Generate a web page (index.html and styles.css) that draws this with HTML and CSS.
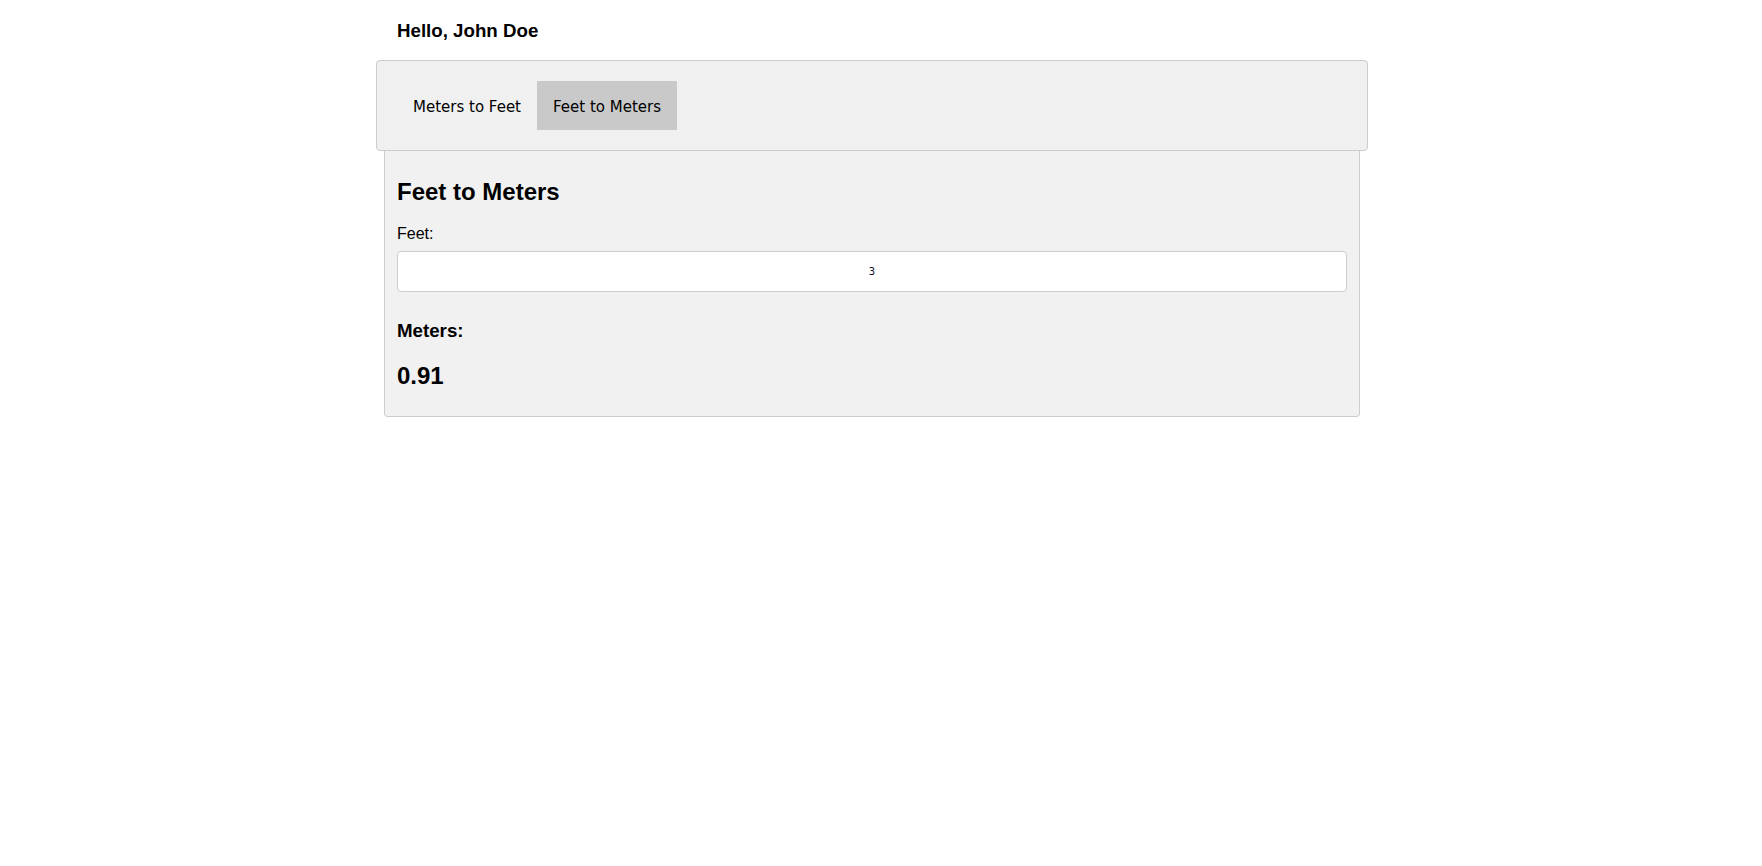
FILE: index.html
```html
<!DOCTYPE html>
<html lang="en">
<head>
<meta charset="utf-8">
<title>Unit Converter</title>
<link rel="stylesheet" href="styles.css">
</head>
<body>
<div class="app">
  <div class="greeting">Hello, John Doe</div>
  <div class="tabbar">
    <button class="tab">Meters to Feet</button>
    <button class="tab tab-active">Feet to Meters</button>
  </div>
  <div class="panel">
    <h2 class="panel-title">Feet to Meters</h2>
    <label class="field-label" for="feet">Feet:</label>
    <input class="field-input" id="feet" type="text" value="3">
    <h3 class="result-label">Meters:</h3>
    <div class="result-value">0.91</div>
  </div>
</div>
</body>
</html>
```

FILE: styles.css
```css
html, body {
  margin: 0;
  padding: 0;
  background: #ffffff;
  font-family: "Liberation Sans", Arial, sans-serif;
  color: #000;
}

.app {
  width: 992px;
  margin-left: 376px;
}

.greeting {
  padding: 20px 21px 0;
  font-size: 18.72px;
  font-weight: bold;
  line-height: 22px;
  margin-bottom: 18px;
}

.tabbar {
  display: flex;
  background: #f0f0f0;
  border: 1px solid #cccccc;
  border-radius: 4px;
  padding: 20px;
  height: 49px;
}

.tab {
  border: none;
  background: transparent;
  font-family: "DejaVu Sans", Tahoma, sans-serif;
  font-size: 15px;
  line-height: 21px;
  padding: 16px 16px 12px;
  margin: 0;
  color: #000;
  cursor: pointer;
}

.tab-active {
  background: #c9c9c9;
}

.panel {
  margin: 0 8px;
  background: #f1f1f1;
  border: 1px solid #cccccc;
  border-top: none;
  border-radius: 0 0 4px 4px;
  padding: 13px 12px 12px;
}

.panel-title {
  margin: 14px 0 0;
  font-size: 24px;
  line-height: 28px;
  font-weight: bold;
}

.field-label {
  display: block;
  margin-top: 19px;
  margin-bottom: 8px;
  font-size: 16px;
  line-height: 18px;
}

.field-input {
  display: block;
  box-sizing: border-box;
  width: 100%;
  height: 41px;
  margin: 0;
  border: 1px solid #cccccc;
  border-radius: 4px;
  background: #ffffff;
  font-family: "DejaVu Sans", Tahoma, sans-serif;
  font-size: 10px;
  text-align: center;
  color: #0a0a2a;
  padding: 0 10px;
}

.result-label {
  margin: 28px 0 21px;
  font-size: 18.72px;
  line-height: 21px;
  font-weight: bold;
}

.result-value {
  font-size: 24px;
  line-height: 28px;
  font-weight: bold;
  margin-bottom: 14px;
}
```
